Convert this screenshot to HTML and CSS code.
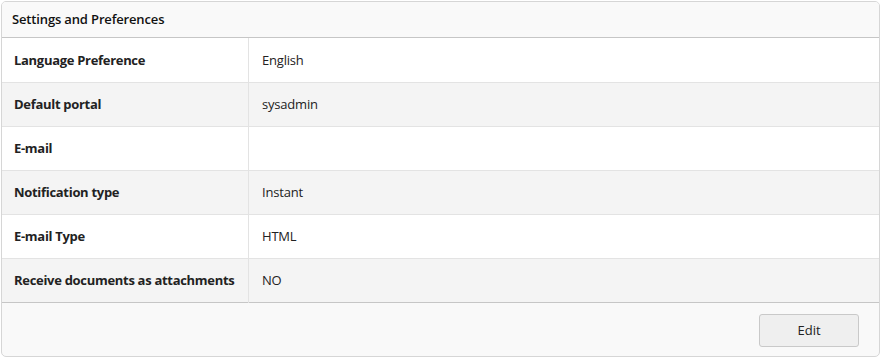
FILE: index.html
```html
<!DOCTYPE html>
<html>
<head>
<meta charset="utf-8">
<link rel="stylesheet" href="styles.css">
</head>
<body>
<div class="panel">
  <div class="panel-head">Settings and Preferences</div>
  <table class="prefs">
    <tr><th>Language Preference</th><td>English</td></tr>
    <tr class="alt"><th>Default portal</th><td>sysadmin</td></tr>
    <tr><th>E-mail</th><td></td></tr>
    <tr class="alt"><th>Notification type</th><td>Instant</td></tr>
    <tr><th>E-mail Type</th><td>HTML</td></tr>
    <tr class="alt"><th>Receive documents as attachments</th><td>NO</td></tr>
  </table>
  <div class="panel-foot">
    <button class="btn">Edit</button>
  </div>
</div>
</body>
</html>
```
FILE: styles.css
```css
html, body {
  margin: 0;
  padding: 0;
  background: #fff;
}
body {
  padding: 1px 3px 0 1px;
  font-family: "Open Sans", "Noto Sans", sans-serif;
  font-size: 13px;
  color: #222;
}
.panel {
  width: 877px;
  height: 354px;
  border: 1px solid #d6d6d6;
  border-radius: 5px;
  background: #f9f9f9;
  overflow: hidden;
  display: flex;
  flex-direction: column;
}
.panel-head {
  height: 35px;
  line-height: 35px;
  padding-left: 10px;
  border-bottom: 1px solid #c6c6c6;
  background: #f9f9f9;
  font-size: 13px;
  font-weight: 600;
  color: #111;
  letter-spacing: -0.15px;
}
.prefs {
  width: 100%;
  border-collapse: collapse;
  background: #fff;
  border-bottom: 1px solid #c6c6c6;
}
.prefs tr {
  height: 44px;
}
.prefs tr + tr th, .prefs tr + tr td {
  border-top: 1px solid #e3e3e3;
}
.prefs tr.alt {
  background: #f4f4f4;
}
.prefs th {
  width: 234px;
  text-align: left;
  font-weight: 700;
  padding: 0 0 0 12px;
  border-right: 1px solid #e3e3e3;
  letter-spacing: -0.3px;
  font-size: 13px;
}
.prefs td {
  padding: 0 0 0 13px;
  letter-spacing: -0.2px;
}
.panel-foot {
  flex: 1;
  display: flex;
  justify-content: flex-end;
  align-items: flex-start;
  padding: 11px 20px 0 0;
}
.btn {
  width: 100px;
  height: 33px;
  border: 1px solid #c9c9c9;
  border-radius: 3px;
  background: #efefef;
  font-family: inherit;
  font-size: 13px;
  color: #222;
}
```
